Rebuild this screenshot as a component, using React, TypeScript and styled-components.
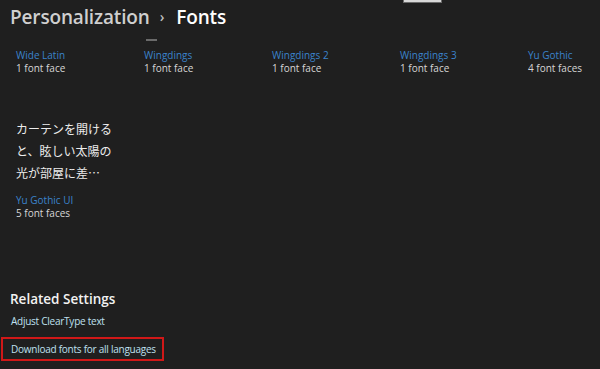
import styled, { createGlobalStyle } from 'styled-components'

const GlobalStyle = createGlobalStyle`
  html, body {
    margin: 0;
    padding: 0;
    background: #1f1f1f;
    font-family: "Segoe UI", "Open Sans", "Noto Sans", "Noto Sans CJK JP", sans-serif;
  }
`

const Page = styled.div`
  position: relative;
  width: 600px;
  height: 369px;
  overflow: hidden;
  background: #1f1f1f;
  box-sizing: border-box;
  padding: 4px 0 0 10px;
`

const Crumb = styled.h1`
  margin: 0;
  display: flex;
  align-items: center;
  gap: 10px;
  font-size: 19px;
  line-height: 26px;
  font-weight: 600;
  color: #cfcfcf;
  letter-spacing: -0.15px;
  .sep {
    font-size: 14px;
    color: #bdbdbd;
    margin-right: 2px;
  }
  .current {
    color: #ffffff;
  }
`

const Grid = styled.div`
  display: grid;
  grid-template-columns: repeat(5, 128px);
  margin: 3px 0 0 6px;
`

const Tile = styled.div<{ $tall?: boolean }>`
  display: flex;
  flex-direction: column;
  height: ${p => (p.$tall ? '145px' : '42px')};
  justify-content: flex-end;
`

const Sample = styled.div`
  font-family: "Noto Sans CJK JP", sans-serif;
  font-size: 12px;
  line-height: 22px;
  color: #ececec;
  margin-bottom: 10px;
  span {
    display: block;
    white-space: nowrap;
  }
`

const FontName = styled.div`
  font-size: 10px;
  line-height: 13px;
  color: #3b83cc;
`

const Faces = styled.div`
  font-size: 10px;
  line-height: 13px;
  color: #d6d6d6;
`

const Related = styled.section`
  margin-top: 70px;
  display: flex;
  flex-direction: column;
  align-items: flex-start;
`

const Heading = styled.h2`
  margin: 0 0 6px;
  font-size: 13.5px;
  line-height: 18px;
  font-weight: 600;
  color: #f2f2f2;
`

const SettingLink = styled.div<{ $marked?: boolean }>`
  font-size: 10px;
  line-height: 14px;
  letter-spacing: -0.25px;
  color: #bfe0f0;
  padding: ${p => (p.$marked ? '3px 6px 3px 8px' : '0 0 0 1px')};
  margin-left: ${p => (p.$marked ? '-9px' : '0')};
  margin-top: ${p => (p.$marked ? '9px' : '0')};
  border: ${p => (p.$marked ? '2px solid #d01818' : 'none')};
`

const Scrap = styled.div<{ $x: number; $y: number; $w: number; $h: number }>`
  position: absolute;
  left: ${p => p.$x}px;
  top: ${p => p.$y}px;
  width: ${p => p.$w}px;
  height: ${p => p.$h}px;
  background: #d8d8d8;
  border: 1px solid #6a6a6a;
  box-sizing: border-box;
`

const top = [
  { name: 'Wide Latin', faces: '1 font face' },
  { name: 'Wingdings', faces: '1 font face' },
  { name: 'Wingdings 2', faces: '1 font face' },
  { name: 'Wingdings 3', faces: '1 font face' },
  { name: 'Yu Gothic', faces: '4 font faces' },
]

const sampleLines = ['カーテンを開ける', 'と、眩しい太陽の', '光が部屋に差…']

export default function App() {
  return (
    <Page>
      <GlobalStyle />
      <Crumb>
        <span>Personalization</span>
        <span className="sep">›</span>
        <span className="current">Fonts</span>
      </Crumb>
      <Grid>
        {top.map(f => (
          <Tile key={f.name}>
            <FontName>{f.name}</FontName>
            <Faces>{f.faces}</Faces>
          </Tile>
        ))}
        <Tile $tall>
          <Sample>
            {sampleLines.map(l => (
              <span key={l}>{l}</span>
            ))}
          </Sample>
          <FontName>Yu Gothic UI</FontName>
          <Faces>5 font faces</Faces>
        </Tile>
      </Grid>
      <Related>
        <Heading>Related Settings</Heading>
        <SettingLink>Adjust ClearType text</SettingLink>
        <SettingLink $marked>Download fonts for all languages</SettingLink>
      </Related>
      <Scrap $x={403} $y={-1} $w={39} $h={4} />
      <Scrap $x={146} $y={39} $w={11} $h={2} />
    </Page>
  )
}
